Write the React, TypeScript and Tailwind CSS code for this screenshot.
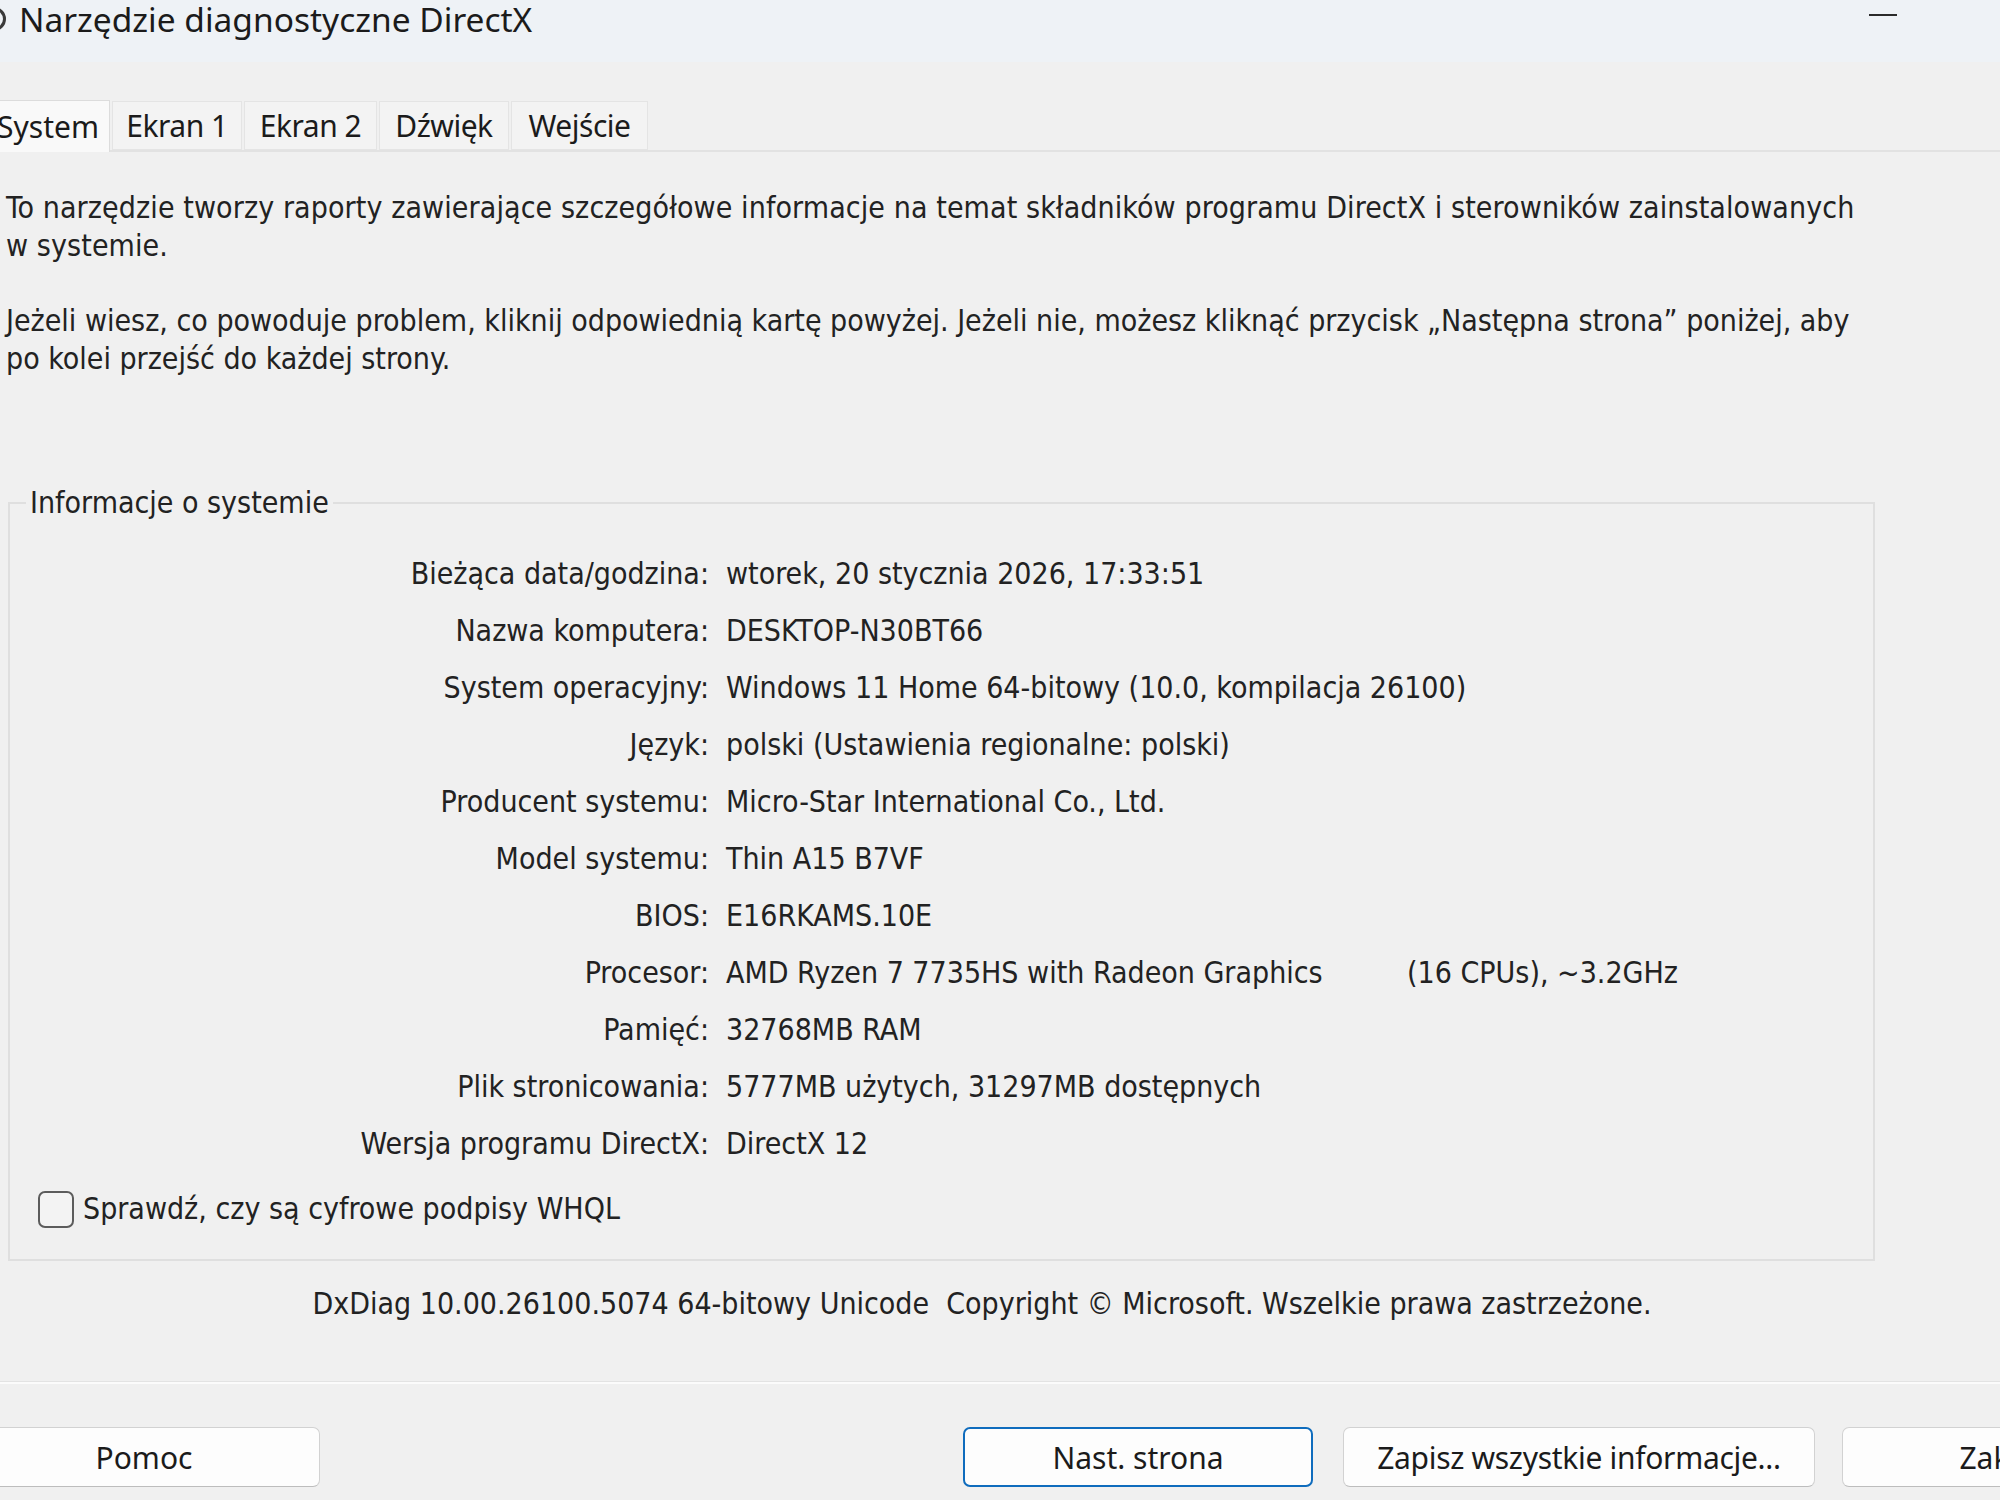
import React from "react";

const body = "font-['DejaVu_Sans_Condensed','DejaVu_Sans',sans-serif]";
const ui = "font-['Noto_Sans','Open_Sans',sans-serif]";

const rows: [string, React.ReactNode][] = [
  ["Bieżąca data/godzina:", "wtorek, 20 stycznia 2026, 17:33:51"],
  ["Nazwa komputera:", "DESKTOP-N30BT66"],
  ["System operacyjny:", "Windows 11 Home 64-bitowy (10.0, kompilacja 26100)"],
  ["Język:", "polski (Ustawienia regionalne: polski)"],
  ["Producent systemu:", "Micro-Star International Co., Ltd."],
  ["Model systemu:", "Thin A15 B7VF"],
  ["BIOS:", "E16RKAMS.10E"],
  [
    "Procesor:",
    <span className="flex">
      <span className="w-[681px] shrink-0">AMD Ryzen 7 7735HS with Radeon Graphics</span>
      <span>(16 CPUs), ~3.2GHz</span>
    </span>,
  ],
  ["Pamięć:", "32768MB RAM"],
  ["Plik stronicowania:", "5777MB użytych, 31297MB dostępnych"],
  ["Wersja programu DirectX:", "DirectX 12"],
];

const tabs = ["Ekran 1", "Ekran 2", "Dźwięk", "Wejście"];
const tabW = ["w-[130px]", "w-[133px]", "w-[130px]", "w-[137px]"];

export default function App() {
  return (
    <div className="w-[2000px] h-[1500px] overflow-hidden bg-[#f0f0f0] text-[#1e1e1e]">
      {/* title bar */}
      <div className="h-[62px] bg-[#eef2f6] flex items-start">
        <div className="w-[24px] h-[24px] mt-[7px] -ml-[18px] rounded-full border-[3px] border-[#3a3a3a] shrink-0" />
        <div className={`${ui} ml-[13px] mt-[2px] text-[33.5px] leading-[34px] text-[#1b1b1b]`}>
          Narzędzie diagnostyczne DirectX
        </div>
        <div className="ml-auto mr-[103px] mt-[14px] w-[28px] h-[2px] bg-[#2a2a2a]" />
      </div>

      {/* tabs */}
      <div className="relative h-[90px] border-b-2 border-[#e2e2e2]">
        <div className="absolute left-0 bottom-[-2px] flex items-end">
          <div className={`${ui} -ml-[15px] w-[125px] h-[52px] bg-[#f9f9f9] border border-b-0 border-[#dcdcdc] flex items-center pl-[11px] text-[30px] text-[#1b1b1b]`}>
            System
          </div>
          {tabs.map((t, i) => (
            <div
              key={t}
              className={`${ui} ${tabW[i]} ml-[2px] h-[49px] mb-[2px] bg-[#f3f3f3] border border-[#e4e4e4] flex items-center justify-center text-[30px] tracking-[-0.5px] text-[#1b1b1b]`}
            >
              {t}
            </div>
          ))}
        </div>
      </div>

      {/* description */}
      <div className={`${body} text-[30px] leading-[38px] pl-[6px] pt-[37px] text-[#222]`}>
        <p className="whitespace-nowrap tracking-[0.1px]">
          To narzędzie tworzy raporty zawierające szczegółowe informacje na temat składników programu DirectX i sterowników zainstalowanych
          <br />w systemie.
        </p>
        <p className="whitespace-nowrap mt-[37px]">
          Jeżeli wiesz, co powoduje problem, kliknij odpowiednią kartę powyżej. Jeżeli nie, możesz kliknąć przycisk „Następna strona” poniżej, aby
          <br />po kolei przejść do każdej strony.
        </p>
      </div>

      {/* group box */}
      <div className={`${body} relative ml-[8px] mt-[124px] w-[1867px] h-[759px] border-2 border-[#dfdfdf] text-[30px] text-[#222]`}>
        <div className="absolute -top-[20px] left-[16px] px-[4px] bg-[#f0f0f0] leading-[38px]">
          Informacje o systemie
        </div>
        <div className="pt-[41px]">
          {rows.map(([k, v]) => (
            <div key={k} className="flex h-[57px] items-center whitespace-nowrap">
              <div className="w-[699px] shrink-0 text-right">{k}</div>
              <div className="ml-[17px]">{v}</div>
            </div>
          ))}
        </div>
        <div className="flex items-center mt-[18px] ml-[28px]">
          <div className="w-[36px] h-[37px] shrink-0 rounded-[7px] border-2 border-[#5c5c5c] bg-[#f3f3f3]" />
          <div className="ml-[9px] leading-[38px]">Sprawdź, czy są cyfrowe podpisy WHQL</div>
        </div>
      </div>

      {/* footer */}
      <div className={`${body} w-[1964px] text-center text-[30px] leading-[38px] mt-[24px] whitespace-nowrap text-[#222]`}>
        DxDiag 10.00.26100.5074 64-bitowy Unicode&nbsp;&nbsp;Copyright © Microsoft. Wszelkie prawa zastrzeżone.
      </div>

      {/* separator */}
      <div className="mt-[58px] h-[1px] bg-[#e3e3e3]" />
      <div className="h-[2px] bg-[#fbfbfb]" />

      {/* buttons */}
      <div className={`${ui} flex mt-[43px] text-[30px] text-[#1b1b1b] whitespace-nowrap`}>
        <div className="-ml-[32px] w-[352px] shrink-0 h-[60px] bg-[#fdfdfd] border border-[#d2d2d2] border-b-[#bdbdbd] rounded-[7px] flex items-center justify-center">
          Pomoc
        </div>
        <div className="ml-[643px] w-[350px] shrink-0 h-[60px] bg-[#fdfdfd] border-2 border-[#0f6cbd] rounded-[7px] flex items-center justify-center">
          Nast. strona
        </div>
        <div className="ml-[30px] w-[472px] shrink-0 h-[60px] bg-[#fdfdfd] border border-[#d2d2d2] border-b-[#bdbdbd] rounded-[7px] flex items-center justify-center tracking-[-0.3px]">
          Zapisz wszystkie informacje...
        </div>
        <div className="ml-[27px] w-[350px] shrink-0 h-[60px] bg-[#fdfdfd] border border-[#d2d2d2] border-b-[#bdbdbd] rounded-[7px] flex items-center justify-center">
          Zakończ
        </div>
      </div>
    </div>
  );
}
